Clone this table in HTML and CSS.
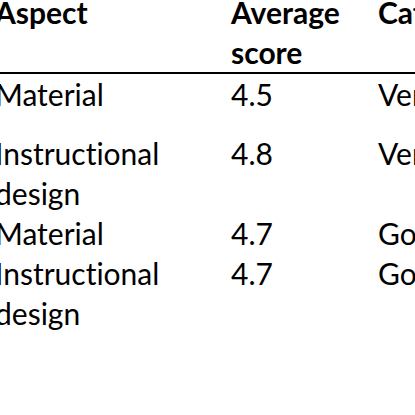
FILE: index.html
```html
<!DOCTYPE html>
<html lang="en">

<head>
    <meta charset="UTF-8">
    <meta name="viewport" content="width=device-width, initial-scale=1.0">
    <title>Evaluation results</title>
    <link rel="stylesheet" href="styles.css">
</head>

<body>
    <table class="results">
        <thead>
            <tr>
                <th class="aspect">Aspect</th>
                <th class="score">Average<br>score</th>
                <th class="category">Category</th>
            </tr>
        </thead>
        <tbody>
            <tr class="first">
                <td>Material</td>
                <td>4.5</td>
                <td>Very good</td>
            </tr>
            <tr>
                <td>Instructional<br>design</td>
                <td>4.8</td>
                <td>Very good</td>
            </tr>
            <tr>
                <td>Material</td>
                <td>4.7</td>
                <td>Good</td>
            </tr>
            <tr>
                <td>Instructional<br>design</td>
                <td>4.7</td>
                <td>Good</td>
            </tr>
        </tbody>
    </table>
</body>

</html>
```

FILE: styles.css
```css
body {
    margin: 0;
    padding: 0;
    width: 415px;
    height: 415px;
    overflow: hidden;
    background: #fff;
}

.results {
    border-collapse: collapse;
    table-layout: fixed;
    width: 583px;
    margin: -8px 0 0 -5px;
    font-family: Lato, "Liberation Sans", sans-serif;
    font-size: 30px;
    line-height: 40px;
    font-variant-ligatures: none;
    color: #000;
    white-space: nowrap;
}

.results th,
.results td {
    padding: 0;
    text-align: left;
    vertical-align: top;
}

.results th {
    font-weight: bold;
    border-bottom: 2px solid #000;
}

.aspect {
    width: 236px;
}

.score {
    width: 147px;
}

.category {
    width: 200px;
}

.results tr.first td {
    padding-bottom: 19px;
}
```
